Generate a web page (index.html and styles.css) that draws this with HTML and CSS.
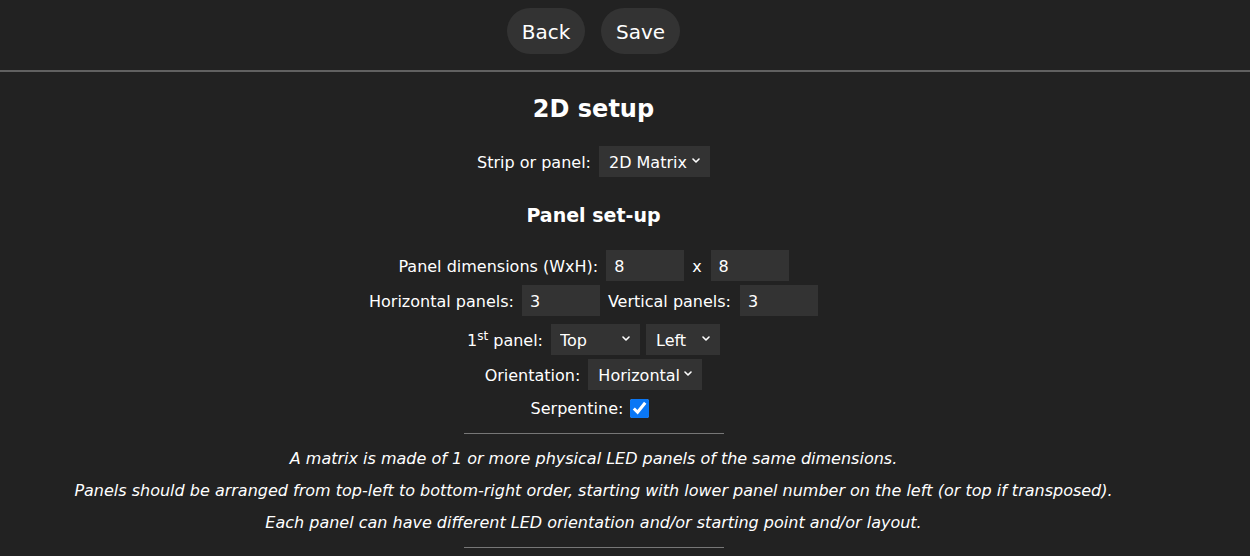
FILE: index.html
```html
<!DOCTYPE html>
<html lang="en">
<head>
<meta charset="utf-8">
<title>2D Set-up</title>
<link rel="stylesheet" href="styles.css">
</head>
<body>
<form class="form" onsubmit="return false">
  <div class="toprow">
    <div class="btns">
      <button type="button" class="btn">Back</button>
      <button type="submit" class="btn">Save</button>
    </div>
    <hr class="hr-full">
  </div>
  <div class="main">
    <h2 class="title">2D setup</h2>
    <div class="row row-strip">
      <span class="lbl">Strip or panel:</span>
      <span class="sel sel-mode">
        <select><option>1D Strip</option><option selected>2D Matrix</option></select>
        <svg class="chev" viewBox="0 0 8 5" width="8" height="5"><path d="M1 1 L4 4 L7 1" fill="none" stroke="#fff" stroke-width="1.6" stroke-linecap="round" stroke-linejoin="round"/></svg>
      </span>
    </div>
    <h3 class="subtitle">Panel set-up</h3>
    <div class="row">
      <span class="lbl">Panel dimensions (WxH):</span>
      <input class="num" type="number" value="8">
      <span class="lbl lbl-x">x</span>
      <input class="num" type="number" value="8">
    </div>
    <div class="row">
      <span class="lbl">Horizontal panels:</span>
      <input class="num" type="number" value="3">
      <span class="lbl lbl-next">Vertical panels:</span>
      <input class="num" type="number" value="3">
    </div>
    <div class="row row-first">
      <span class="lbl">1<sup class="sup">st</sup> panel:</span>
      <span class="sel sel-top">
        <select><option selected>Top</option><option>Bottom</option></select>
        <svg class="chev" viewBox="0 0 8 5" width="8" height="5"><path d="M1 1 L4 4 L7 1" fill="none" stroke="#fff" stroke-width="1.6" stroke-linecap="round" stroke-linejoin="round"/></svg>
      </span>
      <span class="sel sel-left">
        <select><option selected>Left</option><option>Right</option></select>
        <svg class="chev" viewBox="0 0 8 5" width="8" height="5"><path d="M1 1 L4 4 L7 1" fill="none" stroke="#fff" stroke-width="1.6" stroke-linecap="round" stroke-linejoin="round"/></svg>
      </span>
    </div>
    <div class="row">
      <span class="lbl">Orientation:</span>
      <span class="sel sel-orient">
        <select><option selected>Horizontal</option><option>Vertical</option></select>
        <svg class="chev" viewBox="0 0 8 5" width="8" height="5"><path d="M1 1 L4 4 L7 1" fill="none" stroke="#fff" stroke-width="1.6" stroke-linecap="round" stroke-linejoin="round"/></svg>
      </span>
    </div>
    <div class="row row-serp">
      <span class="lbl">Serpentine:</span>
      <input class="chk" type="checkbox" checked>
    </div>
    <hr class="hr-short">
    <p class="notes"><i>A matrix is made of 1 or more physical LED panels of the same dimensions.</i><br><i>Panels should be arranged from top-left to bottom-right order, starting with lower panel number on the left (or top if transposed).</i><br><i>Each panel can have different LED orientation and/or starting point and/or layout.</i></p>
    <hr class="hr-short">
  </div>
</form>
</body>
</html>
```

FILE: styles.css
```css
html, body {
  margin: 0;
  padding: 0;
}

body {
  background: #222;
  color: #fff;
  font-family: "DejaVu Sans", Verdana, sans-serif;
  font-size: 16px;
  line-height: 32px;
  text-align: center;
}

.form {
  margin: 0;
}

.toprow {
  background: #222;
}

.btns {
  width: 1187px;
  display: flex;
  justify-content: center;
  gap: 16px;
  padding-top: 8px;
  height: 46px;
  padding-bottom: 16px;
}

.btn {
  background: #333;
  color: #fff;
  font-family: "DejaVu Sans", Verdana, sans-serif;
  font-size: 20px;
  border: 0;
  border-radius: 23px;
  height: 46px;
  width: 78px;
  padding: 2px 0 0;
  margin: 0;
  cursor: pointer;
}

.btn + .btn {
  width: 79px;
}

.hr-full {
  margin: 0;
  border: 0;
  border-top: 2px solid #616161;
  height: 0;
}

.main {
  width: 1187px;
}

.title {
  margin: 13px 0 0;
  font-size: 24px;
  line-height: 48px;
  font-weight: bold;
}

.row {
  display: flex;
  justify-content: center;
  align-items: center;
  height: 35px;
  gap: 8px;
}

.row-strip {
  margin-top: 11px;
}

.subtitle {
  margin: 16px 0 15px;
  padding-top: 1px;
  height: 37px;
  font-size: 19px;
  line-height: 38px;
  font-weight: bold;
}

.row-first {
  height: 35px;
  padding-top: 4px;
}

.row-serp {
  height: 32px;
}

.lbl {
  white-space: nowrap;
  padding-top: 2px;
}

.lbl-x {
  margin: 0 1px 0 0;
}

.lbl-next {
  margin-right: 1px;
}

.sup {
  font-size: 12px;
  line-height: 0;
  vertical-align: 6px;
}

.num {
  box-sizing: border-box;
  width: 78px;
  height: 31px;
  margin: 0;
  padding: 2px 0 0 8px;
  background: #333;
  color: #fff;
  border: 0;
  font-family: "DejaVu Sans", Verdana, sans-serif;
  font-size: 16px;
  outline: none;
  -moz-appearance: textfield;
  appearance: textfield;
}

.num::-webkit-outer-spin-button,
.num::-webkit-inner-spin-button {
  -webkit-appearance: none;
  margin: 0;
}

.sel {
  position: relative;
  display: inline-flex;
  height: 31px;
}

.sel select {
  appearance: none;
  -webkit-appearance: none;
  box-sizing: border-box;
  width: 100%;
  height: 31px;
  margin: 0;
  padding: 2px 0 0 10px;
  background: #333;
  color: #fff;
  border: 0;
  border-radius: 0;
  font-family: "DejaVu Sans", Verdana, sans-serif;
  font-size: 16px;
  outline: none;
}

.sel-mode { width: 111px; }
.sel-top { width: 89px; }
.sel-left { width: 74px; margin-left: -2px; }
.sel-orient { width: 114px; }

.sel-top select { padding-left: 9px; }

.chev {
  position: absolute;
  right: 10px;
  top: 12px;
  pointer-events: none;
}

.chk {
  width: 19px;
  height: 19px;
  margin: 0 7px 0 -1px;
  accent-color: #0a77f5;
}

.hr-short {
  width: 260px;
  margin: 9px auto 8px;
  border: 0;
  border-top: 1px solid #777;
  height: 0;
}

.notes {
  margin: 0;
  padding-top: 1px;
  height: 95px;
  line-height: 32px;
}
```
